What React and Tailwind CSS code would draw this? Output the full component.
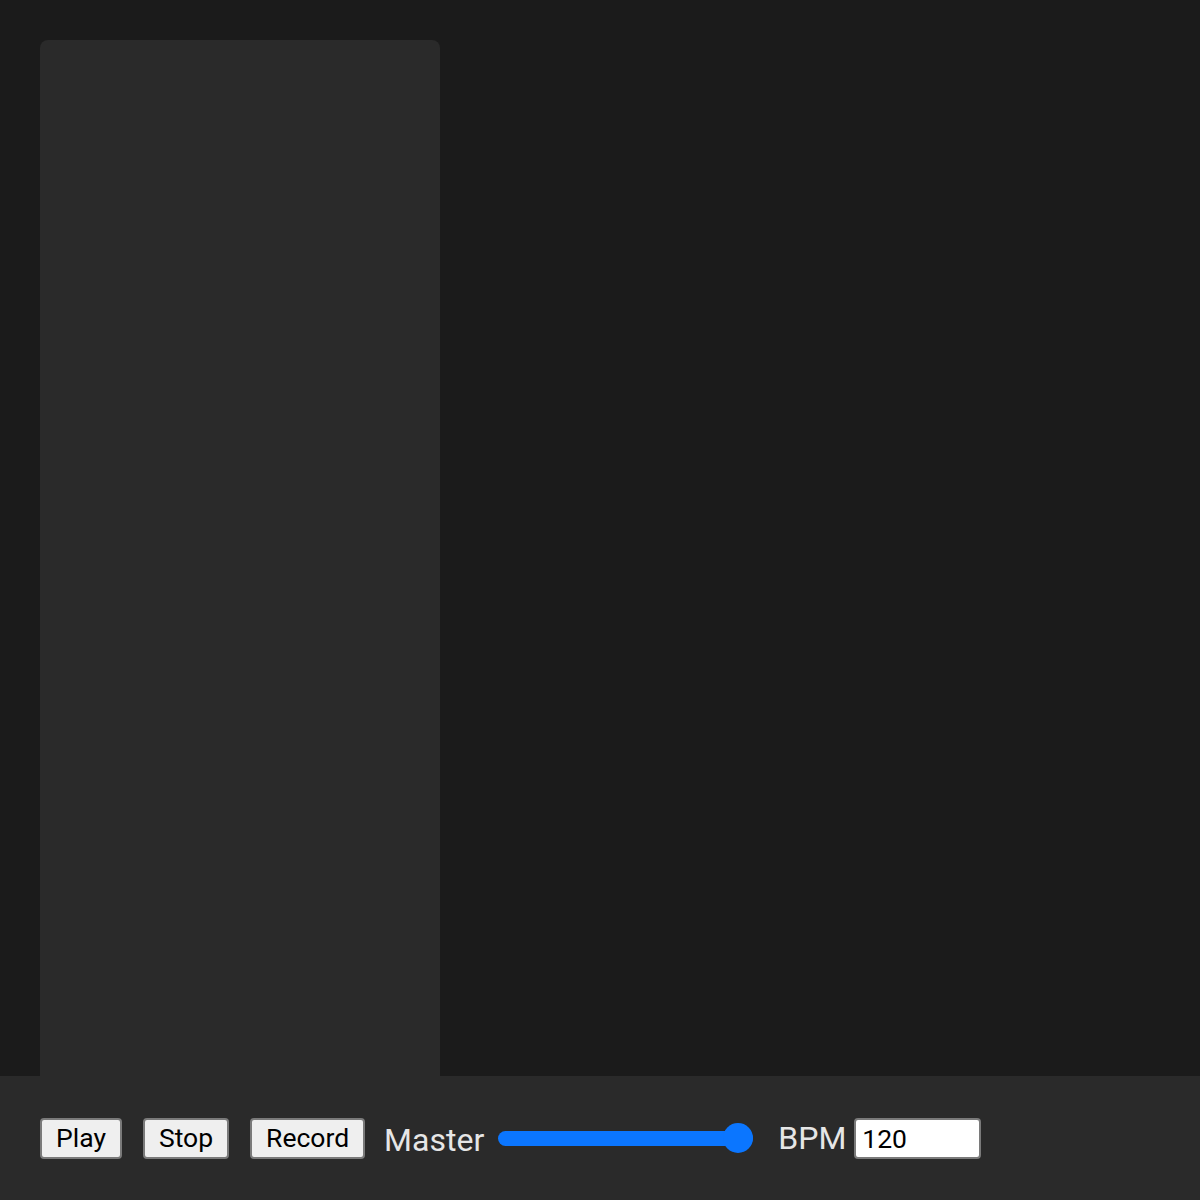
import React from 'react';

const font = { fontFamily: 'Roboto, "Liberation Sans", sans-serif' };

function TransportButton({ label, className = '' }) {
  return (
    <button
      className={`h-[41px] rounded-[4px] border-2 border-[#7a7a7a] bg-[#efefef] px-[14px] text-[26.5px] leading-none text-black ${className}`}
    >
      {label}
    </button>
  );
}

function MasterSlider({ value = 100 }) {
  return (
    <div className="relative ml-[14px] flex h-[30px] w-[255px] items-center">
      <div className="h-[15px] w-full rounded-full bg-[#0b76ff]" />
      <div
        className="absolute top-0 h-[30px] w-[30px] rounded-full bg-[#0b76ff]"
        style={{ left: `calc(${value}% - 30px)` }}
      />
    </div>
  );
}

export default function App() {
  return (
    <div className="flex h-[1200px] w-full flex-col bg-[#1b1b1b]" style={font}>
      <div className="flex flex-1 px-10 pt-10">
        <div className="w-[400px] rounded-t-lg bg-[#2a2a2a]" />
      </div>
      <div className="flex h-[124px] items-center bg-[#2a2a2a] px-10">
        <TransportButton label="Play" />
        <TransportButton label="Stop" className="ml-[21px]" />
        <TransportButton label="Record" className="ml-[21px]" />
        <span className="ml-[19px] mt-[4px] text-[32px] text-[#e6e6e6]">Master</span>
        <MasterSlider />
        <span className="ml-[25px] text-[32px] text-[#e6e6e6]">BPM</span>
        <input
          className="ml-[8px] h-[41px] w-[127px] rounded-[4px] border-2 border-[#7a7a7a] bg-white px-[6px] text-[26.5px] text-black outline-none"
          defaultValue="120"
          type="text"
        />
      </div>
    </div>
  );
}
